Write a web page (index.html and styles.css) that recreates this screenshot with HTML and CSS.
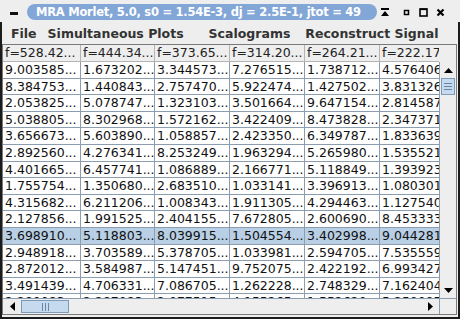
FILE: index.html
```html
<!DOCTYPE html>
<html>
<head>
<meta charset="utf-8">
<link rel="stylesheet" href="styles.css">
</head>
<body>
<div class="titlebar">
  <span class="menu-dash"></span>
  <div class="pill">MRA Morlet, 5.0, s0 = 1.54E-3, dj = 2.5E-1, jtot = 49</div>
  <div class="wbtns">
    <svg class="wb" width="10" height="8" viewBox="0 0 10 8"><rect x="1" y="0" width="8" height="2" fill="#000"/><polygon points="5,3 9,8 1,8" fill="#000"/></svg>
    <svg class="wb" width="8" height="8" viewBox="0 0 8 8"><rect x="2.5" y="2.5" width="4" height="4" fill="none" stroke="#000" stroke-width="1.5"/></svg>
    <svg class="wb" width="9" height="9" viewBox="0 0 9 9"><rect x="1" y="1" width="7" height="7" fill="none" stroke="#000" stroke-width="1.6"/><rect x="1" y="0.5" width="7" height="1.6" fill="#000"/></svg>
    <svg class="wb" width="9" height="9" viewBox="0 0 9 9"><path d="M1.5 1.5 L7.5 7.5 M7.5 1.5 L1.5 7.5" stroke="#000" stroke-width="2.2"/></svg>
  </div>
</div>
<div class="frame">
  <div class="menubar">
    <span class="mi mi-file">File</span>
    <span class="mi mi-sim">Simultaneous Plots</span>
    <span class="mi mi-sca">Scalograms</span>
    <span class="mi mi-rec">Reconstruct Signal</span>
  </div>
  <div class="pane">
    <div class="hdr-view">
      <div class="row hrow"><div class="cell">f=528.42...</div><div class="cell">f=444.34...</div><div class="cell">f=373.65...</div><div class="cell">f=314.20...</div><div class="cell">f=264.21...</div><div class="cell">f=222.17...</div></div>
    </div>
    <div class="hdr-corner"></div>
    <div class="body-view">
      <div class="row"><div class="cell">9.003585...</div><div class="cell">1.673202...</div><div class="cell">3.344573...</div><div class="cell">7.276515...</div><div class="cell">1.738712...</div><div class="cell">4.576406...</div></div>
      <div class="row"><div class="cell">8.384753...</div><div class="cell">1.440843...</div><div class="cell">2.757470...</div><div class="cell">5.922474...</div><div class="cell">1.427502...</div><div class="cell">3.831326...</div></div>
      <div class="row"><div class="cell">2.053825...</div><div class="cell">5.078747...</div><div class="cell">1.323103...</div><div class="cell">3.501664...</div><div class="cell">9.647154...</div><div class="cell">2.814587...</div></div>
      <div class="row"><div class="cell">5.038805...</div><div class="cell">8.302968...</div><div class="cell">1.572162...</div><div class="cell">3.422409...</div><div class="cell">8.473828...</div><div class="cell">2.347371...</div></div>
      <div class="row"><div class="cell">3.656673...</div><div class="cell">5.603890...</div><div class="cell">1.058857...</div><div class="cell">2.423350...</div><div class="cell">6.349787...</div><div class="cell">1.833639...</div></div>
      <div class="row"><div class="cell">2.892560...</div><div class="cell">4.276341...</div><div class="cell">8.253249...</div><div class="cell">1.963294...</div><div class="cell">5.265980...</div><div class="cell">1.535521...</div></div>
      <div class="row"><div class="cell">4.401665...</div><div class="cell">6.457741...</div><div class="cell">1.086889...</div><div class="cell">2.166771...</div><div class="cell">5.118849...</div><div class="cell">1.393923...</div></div>
      <div class="row"><div class="cell">1.755754...</div><div class="cell">1.350680...</div><div class="cell">2.683510...</div><div class="cell">1.033141...</div><div class="cell">3.396913...</div><div class="cell">1.080301...</div></div>
      <div class="row"><div class="cell">4.315682...</div><div class="cell">6.211206...</div><div class="cell">1.008343...</div><div class="cell">1.911305...</div><div class="cell">4.294463...</div><div class="cell">1.127540...</div></div>
      <div class="row"><div class="cell">2.127856...</div><div class="cell">1.991525...</div><div class="cell">2.404155...</div><div class="cell">7.672805...</div><div class="cell">2.600690...</div><div class="cell">8.453333...</div></div>
      <div class="row sel"><div class="cell">3.698910...</div><div class="cell">5.118803...</div><div class="cell">8.039915...</div><div class="cell">1.504554...</div><div class="cell">3.402998...</div><div class="cell">9.044281...</div></div>
      <div class="row"><div class="cell">2.948918...</div><div class="cell">3.703589...</div><div class="cell">5.378705...</div><div class="cell">1.033981...</div><div class="cell">2.594705...</div><div class="cell">7.535559...</div></div>
      <div class="row"><div class="cell">2.872012...</div><div class="cell">3.584987...</div><div class="cell">5.147451...</div><div class="cell">9.752075...</div><div class="cell">2.422192...</div><div class="cell">6.993427...</div></div>
      <div class="row"><div class="cell">3.491439...</div><div class="cell">4.706331...</div><div class="cell">7.086705...</div><div class="cell">1.262228...</div><div class="cell">2.748329...</div><div class="cell">7.162404...</div></div>
      <div class="row"><div class="cell">2.280083...</div><div class="cell">2.287083...</div><div class="cell">2.077515...</div><div class="cell">4.155265...</div><div class="cell">1.552620...</div><div class="cell">5.250097...</div></div>
    </div>
    <div class="vscroll">
      <div class="sbtn"><svg width="9" height="5" viewBox="0 0 9 5"><polygon points="4.5,0 9,5 0,5" fill="#000"/></svg></div>
      <div class="vthumb"><span class="hgrip"></span><span class="hgrip"></span><span class="hgrip"></span></div>
      <div class="vtrack"></div>
      <div class="sbtn"><svg width="9" height="5" viewBox="0 0 9 5"><polygon points="0,0 9,0 4.5,5" fill="#000"/></svg></div>
    </div>
    <div class="hscroll">
      <div class="sbtn h"><svg width="5" height="9" viewBox="0 0 5 9"><polygon points="0,4.5 5,0 5,9" fill="#000"/></svg></div>
      <div class="hthumb"><span class="vgrip"></span><span class="vgrip"></span><span class="vgrip"></span></div>
      <div class="htrack"></div>
      <div class="sbtn h"><svg width="5" height="9" viewBox="0 0 5 9"><polygon points="0,0 5,4.5 0,9" fill="#000"/></svg></div>
    </div>
    <div class="corner"></div>
  </div>
</div>
</body>
</html>
```

FILE: styles.css
```css
html, body {
  margin: 0;
  padding: 0;
  width: 460px;
  height: 319px;
  overflow: hidden;
  background: #eeeeee;
  font-family: "DejaVu Sans", sans-serif;
}

.titlebar {
  height: 22px;
  display: flex;
  align-items: center;
  background: #eeeeee;
}

.menu-dash {
  width: 8px;
  height: 3px;
  background: #111;
  margin-left: 10px;
  margin-right: 9px;
  margin-top: 4px;
}

.pill {
  height: 16px;
  line-height: 16px;
  margin-top: 1px;
  padding: 0 0 0 9px;
  width: 341px;
  border-radius: 9px;
  background: #82a6d6;
  color: #fff;
  font-weight: bold;
  font-size: 11.5px;
  letter-spacing: -0.25px;
  white-space: nowrap;
  overflow: hidden;
}

.wbtns {
  display: flex;
  align-items: center;
  margin-left: 3px;
  margin-top: 2px;
}
.wb { display: block; }
.wb:nth-child(2) { margin-left: 12px; }
.wb:nth-child(3) { margin-left: 9px; }
.wb:nth-child(4) { margin-left: 8px; }

.frame {
  height: 297px;
  box-sizing: border-box;
  border-left: 2px solid #1b1b1b;
  border-right: 2px solid #1b1b1b;
  border-bottom: 2px solid #1b1b1b;
  display: flex;
  flex-direction: column;
  padding: 0 1px 2px 0;
}

.menubar {
  height: 22px;
  display: flex;
  align-items: center;
  font-weight: bold;
  font-size: 12.5px;
  color: #333;
}
.mi { white-space: nowrap; }
.mi-file { margin-left: 9px; }
.mi-sim { margin-left: 11px; }
.mi-sca { margin-left: 25px; }
.mi-rec { margin-left: 15px; }

.pane {
  flex: 1;
  border: 1px solid #7a7a7a;
  display: grid;
  grid-template-columns: 1fr 17px;
  grid-template-rows: 17px 1fr 16px;
  min-height: 0;
  background: #eeeeee;
}

.hdr-view, .body-view {
  overflow: hidden;
}
.body-view { background: #fff; }

.row {
  display: grid;
  grid-template-columns: 78px 74px 75px 75px 75px 75px;
  height: 16.6px;
  box-sizing: border-box;
  border-bottom: 1px solid #8d9db0;
  font-size: 12.5px;
  color: #111;
}
.cell {
  box-sizing: border-box;
  border-right: 1px solid #8d9db0;
  padding-left: 2px;
  line-height: 15.6px;
  white-space: nowrap;
  overflow: hidden;
}
.row.sel { background: #b8cfe5; }

.row.hrow {
  height: 17px;
  background: #eeeeee;
  border-bottom: 1px solid #b4b4b4;
  color: #222;
}
.hrow .cell {
  border-right-color: #b4b4b4;
  line-height: 16px;
}

.hdr-corner { background: #eeeeee; }

.vscroll {
  display: flex;
  flex-direction: column;
  border-left: 1px solid #8d9db0;
  background: #eeeeee;
}
.sbtn {
  height: 16px;
  display: flex;
  align-items: center;
  justify-content: center;
  background: #eeeeee;
  flex: none;
}
.vthumb {
  height: 15px;
  flex: none;
  margin: 0 1px;
  background: #c6daef;
  border: 1px solid #7f9ab8;
  display: flex;
  flex-direction: column;
  align-items: center;
  justify-content: center;
  gap: 2px;
}
.hgrip { width: 8px; height: 1px; background: #6b87a8; }
.vtrack { flex: 1; }

.hscroll {
  display: flex;
  border-top: 1px solid #8d9db0;
  background: #eeeeee;
}
.sbtn.h { width: 18px; height: auto; }
.hthumb {
  width: 46px;
  flex: none;
  margin: 1px 0;
  background: #c6daef;
  border: 1px solid #7f9ab8;
  display: flex;
  align-items: center;
  justify-content: center;
  gap: 2px;
}
.vgrip { width: 1px; height: 8px; background: #6b87a8; }
.htrack { flex: 1; }
.corner { background: #eeeeee; border-top: 1px solid #8d9db0; border-left: 1px solid #8d9db0; }
```
